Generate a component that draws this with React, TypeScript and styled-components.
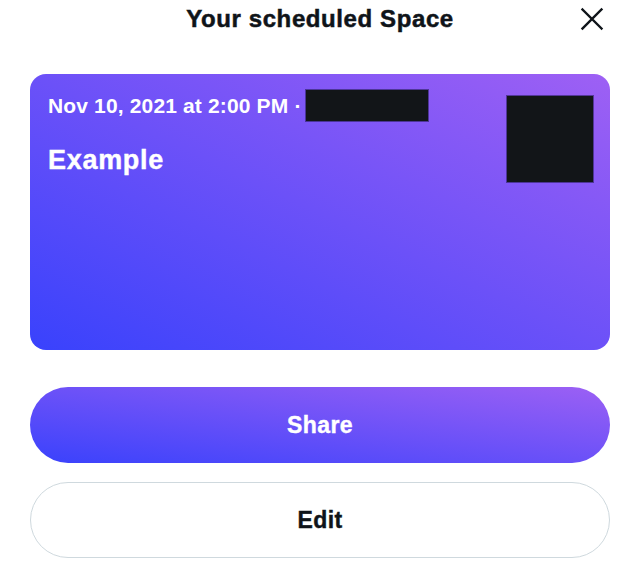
import React from "react";
import styled, { createGlobalStyle } from "styled-components";

const GlobalStyle = createGlobalStyle`
  html, body {
    margin: 0;
    padding: 0;
    background: #ffffff;
  }
  body {
    font-family: "Liberation Sans", Arial, sans-serif;
    color: #0f1419;
    -webkit-font-smoothing: antialiased;
  }
`;

const Sheet = styled.div`
  width: 640px;
  height: 569px;
  display: flex;
  flex-direction: column;
  overflow: hidden;
`;

const Header = styled.header`
  display: grid;
  grid-template-columns: 1fr auto 1fr;
  align-items: center;
  height: 37px;
  padding-top: 1px;
  box-sizing: border-box;
`;

const Title = styled.h1`
  grid-column: 2;
  margin: 0;
  font-size: 24px;
  line-height: 36px;
  font-weight: 700;
  letter-spacing: 0.6px;
  color: #0f1419;
  -webkit-text-stroke: 0.5px #0f1419;
`;

const CloseButton = styled.button`
  grid-column: 3;
  justify-self: end;
  margin-right: 36px;
  width: 24px;
  height: 24px;
  padding: 0;
  border: none;
  background: transparent;
  display: flex;
  align-items: center;
  justify-content: center;
  cursor: pointer;
`;

const Card = styled.section`
  margin: 37px 30px 0;
  height: 276px;
  border-radius: 16px;
  background: linear-gradient(to top right, #3942fc 0%, #9e60f4 100%);
  display: flex;
  align-items: flex-start;
  padding: 16px 17px 0 18px;
  box-sizing: border-box;
  color: #ffffff;
`;

const CardBody = styled.div`
  flex: 1;
  display: flex;
  flex-direction: column;
`;

const MetaRow = styled.div`
  display: flex;
  align-items: center;
  gap: 4px;
  height: 31px;
`;

const MetaText = styled.span`
  font-size: 21px;
  line-height: 31px;
  font-weight: 700;
  letter-spacing: 0.15px;
  white-space: nowrap;
`;

const Redacted = styled.span<{ $w: number; $h: number }>`
  display: block;
  width: ${(p) => p.$w}px;
  height: ${(p) => p.$h}px;
  background: #121518;
  box-shadow: 0 0 0 1px rgba(40, 30, 90, 0.6);
`;

const SpaceTitle = styled.h2`
  margin: 24px 0 0;
  font-size: 27px;
  line-height: 30px;
  font-weight: 700;
  letter-spacing: 0.7px;
  -webkit-text-stroke: 0.4px #ffffff;
`;

const Cover = styled(Redacted)`
  margin-top: 6px;
  flex: none;
`;

const Actions = styled.div`
  display: flex;
  flex-direction: column;
  gap: 19px;
  margin: 37px 30px 0;
`;

const PillButton = styled.button<{ $variant: "primary" | "outline" }>`
  height: 76px;
  border-radius: 38px;
  font-family: "Liberation Sans", Arial, sans-serif;
  font-size: 23px;
  font-weight: 700;
  letter-spacing: 0.4px;
  cursor: pointer;
  box-sizing: border-box;
  ${(p) =>
    p.$variant === "primary"
      ? `
    border: none;
    color: #ffffff;
    -webkit-text-stroke: 0.4px #ffffff;
    background: linear-gradient(to top right, #3a42fc 0%, #9c60f4 100%);
  `
      : `
    border: 1.5px solid #cfd9de;
    color: #0f1419;
    -webkit-text-stroke: 0.4px #0f1419;
    background: #ffffff;
  `}
`;

export default function App() {
  return (
    <Sheet>
      <GlobalStyle />
      <Header>
        <Title>Your scheduled Space</Title>
        <CloseButton aria-label="Close">
          <svg width="24" height="24" viewBox="0 0 24 24" fill="none">
            <path
              d="M2.5 2.5 L21.5 21.5 M21.5 2.5 L2.5 21.5"
              stroke="#0f1419"
              strokeWidth="2.4"
              strokeLinecap="square"
            />
          </svg>
        </CloseButton>
      </Header>

      <Card>
        <CardBody>
          <MetaRow>
            <MetaText>Nov 10, 2021 at 2:00 PM ·</MetaText>
            <Redacted $w={122} $h={31} />
          </MetaRow>
          <SpaceTitle>Example</SpaceTitle>
        </CardBody>
        <Cover $w={86} $h={86} />
      </Card>

      <Actions>
        <PillButton $variant="primary">Share</PillButton>
        <PillButton $variant="outline">Edit</PillButton>
      </Actions>
    </Sheet>
  );
}
